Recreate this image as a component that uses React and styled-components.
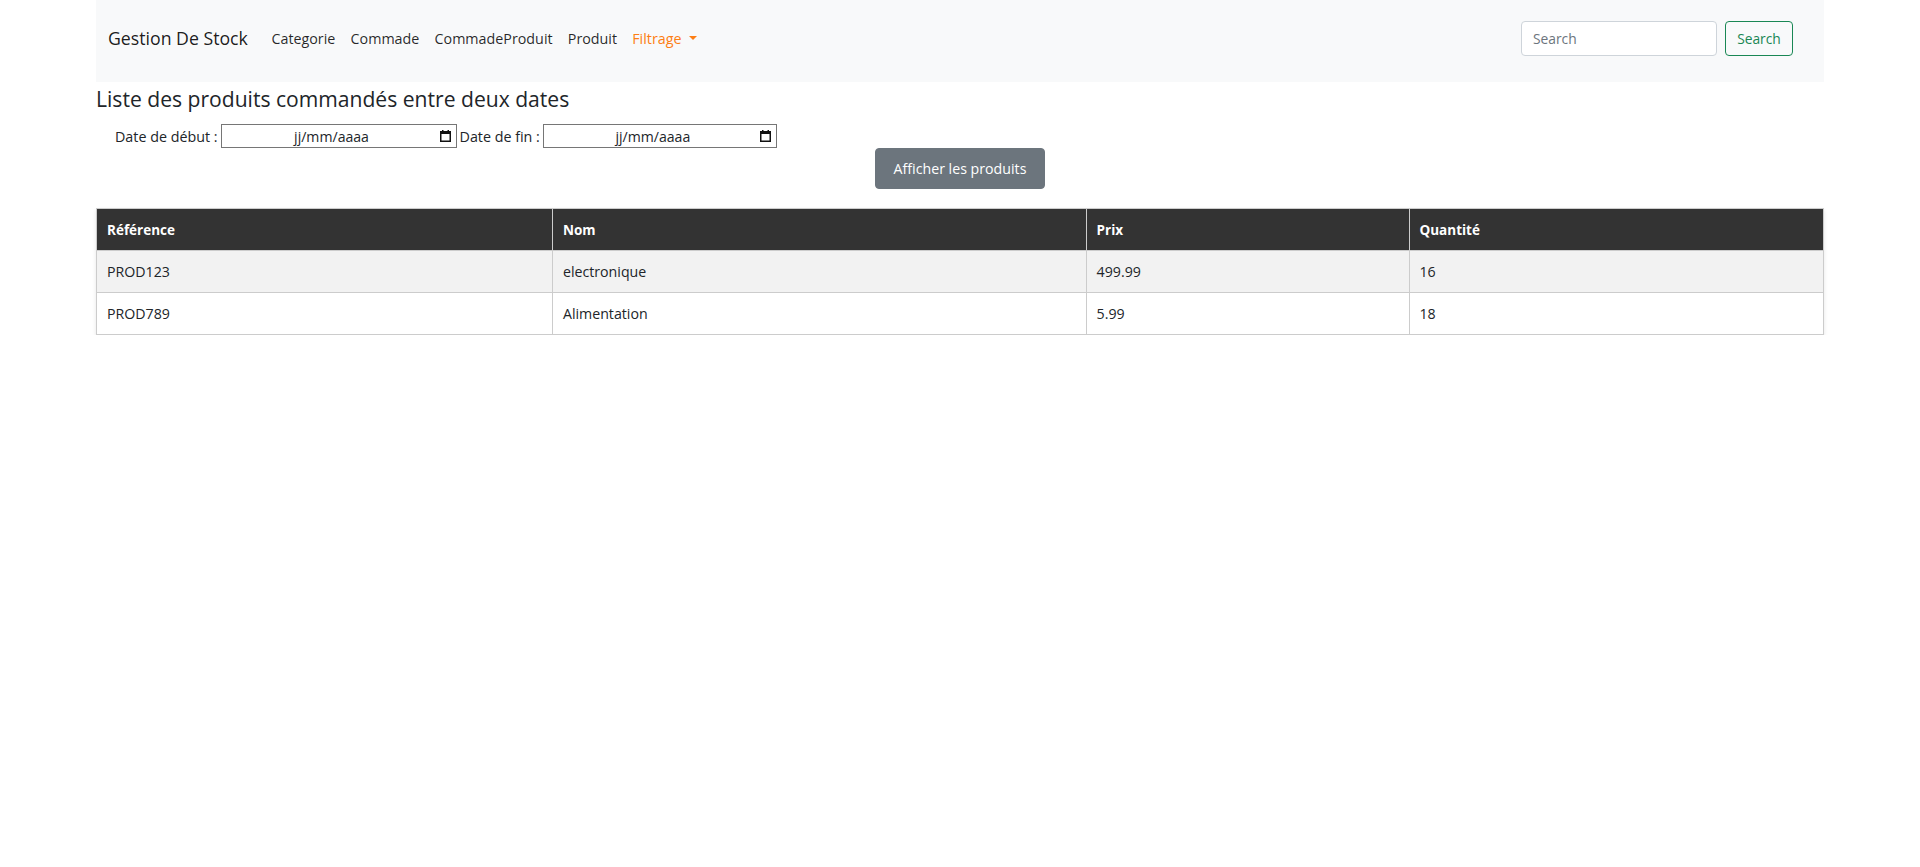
import React from 'react';
import styled, { createGlobalStyle } from 'styled-components';

const GlobalStyle = createGlobalStyle`
  body {
    margin: 0;
    font-family: "Open Sans", "Noto Sans", Arial, sans-serif;
    color: #212529;
    background: #fff;
  }
  * { box-sizing: border-box; }
`;

const Page = styled.div`
  width: 90%;
  margin: 0 auto;
`;

const Navbar = styled.nav`
  display: flex;
  align-items: center;
  height: 82px;
  padding: 0 31px 6px 12px;
  background: #f8f9fa;
`;

const Brand = styled.a`
  font-size: 17.7px;
  color: rgba(0, 0, 0, 0.9);
  text-decoration: none;
  margin-right: 16px;
`;

const NavList = styled.ul`
  display: flex;
  list-style: none;
  margin: 0;
  padding: 0;
`;

const NavLink = styled.a`
  display: flex;
  align-items: center;
  padding: 0 7.6px;
  font-size: 14.3px;
  text-decoration: none;
  color: ${p => (p.$accent ? '#fd7e14' : 'rgba(0, 0, 0, 0.85)')};
`;

const Caret = styled.span`
  display: inline-block;
  margin-left: 7px;
  border-top: 4px solid #fd7e14;
  border-left: 4px solid transparent;
  border-right: 4px solid transparent;
`;

const SearchForm = styled.form`
  display: flex;
  gap: 8px;
  margin-left: auto;
`;

const SearchInput = styled.input`
  width: 196px;
  height: 35px;
  padding: 0 11px;
  font-family: inherit;
  font-size: 13.8px;
  border: 1px solid #ced4da;
  border-radius: 4px;
  background: #fff;
  &::placeholder { color: #6c757d; }
`;

const OutlineButton = styled.button`
  width: 68px;
  height: 35px;
  font-family: inherit;
  font-size: 13.8px;
  color: #198754;
  background: transparent;
  border: 1px solid #198754;
  border-radius: 4px;
`;

const Title = styled.h4`
  margin: 4px 0 0;
  font-size: 21.1px;
  font-weight: 400;
  line-height: 26px;
`;

const DateRow = styled.div`
  display: flex;
  align-items: center;
  height: 24px;
  margin-top: 12px;
  padding-left: 19px;
  font-size: 14.3px;
`;

const Label = styled.label`
  margin-right: 3px;
`;

const DateBox = styled.div`
  display: flex;
  align-items: center;
  width: ${p => p.$w}px;
  height: 24px;
  margin-right: 3px;
  padding: 0 5px 0 2px;
  border: 1px solid #767676;
  font-size: 14.1px;
`;

const DateText = styled.span`
  flex: 1;
  text-align: center;
`;

const ButtonRow = styled.div`
  display: flex;
  justify-content: center;
`;

const SecondaryButton = styled.button`
  width: 170px;
  height: 41px;
  font-family: inherit;
  font-size: 14.2px;
  color: #fff;
  background: #6c757d;
  border: 1px solid #6c757d;
  border-radius: 4px;
`;

const Table = styled.table`
  width: 100%;
  margin-top: 19px;
  border-collapse: collapse;
  border: 1px solid #ccc;
  box-shadow: 0 2px 4px rgba(0, 0, 0, 0.1);
  font-size: 14.2px;
`;

const Th = styled.th`
  height: 42px;
  padding: 0 10px;
  text-align: left;
  font-size: 13.5px;
  font-weight: 700;
  color: #fff;
  background: #333;
  border: 1px solid #ccc;
`;

const Tr = styled.tr`
  background: ${p => (p.$striped ? '#f2f2f2' : '#fff')};
`;

const Td = styled.td`
  height: 42px;
  padding: 0 10px;
  border: 1px solid #ccc;
`;

const CalendarIcon = () => (
  <svg width="11" height="12" viewBox="0 0 11 12">
    <rect x="0.75" y="1.75" width="9.5" height="9.5" fill="none" stroke="#111" strokeWidth="1.5" />
    <rect x="0" y="1" width="11" height="3" fill="#111" />
    <rect x="2" y="0" width="1.5" height="2" fill="#111" />
    <rect x="7.5" y="0" width="1.5" height="2" fill="#111" />
  </svg>
);

const columns = [
  { label: 'Référence', width: '26.4%' },
  { label: 'Nom', width: '30.9%' },
  { label: 'Prix', width: '18.7%' },
  { label: 'Quantité', width: '24%' },
];

const produits = [
  { ref: 'PROD123', nom: 'electronique', prix: '499.99', qte: 16 },
  { ref: 'PROD789', nom: 'Alimentation', prix: '5.99', qte: 18 },
];

export default function App() {
  return (
    <>
      <GlobalStyle />
      <Page>
        <Navbar>
          <Brand href="#">Gestion De Stock</Brand>
          <NavList>
            <li><NavLink href="#">Categorie</NavLink></li>
            <li><NavLink href="#">Commade</NavLink></li>
            <li><NavLink href="#">CommadeProduit</NavLink></li>
            <li><NavLink href="#">Produit</NavLink></li>
            <li>
              <NavLink href="#" $accent>
                Filtrage<Caret />
              </NavLink>
            </li>
          </NavList>
          <SearchForm onSubmit={e => e.preventDefault()}>
            <SearchInput type="search" placeholder="Search" />
            <OutlineButton type="submit">Search</OutlineButton>
          </SearchForm>
        </Navbar>

        <Title>Liste des produits commandés entre deux dates</Title>
        <DateRow>
          <Label>Date de début :</Label>
          <DateBox $w={236}>
            <DateText>jj/mm/aaaa</DateText>
            <CalendarIcon />
          </DateBox>
          <Label>Date de fin :</Label>
          <DateBox $w={234}>
            <DateText>jj/mm/aaaa</DateText>
            <CalendarIcon />
          </DateBox>
        </DateRow>
        <ButtonRow>
          <SecondaryButton>Afficher les produits</SecondaryButton>
        </ButtonRow>

        <Table>
          <thead>
            <tr>
              {columns.map(c => (
                <Th key={c.label} style={{ width: c.width }}>{c.label}</Th>
              ))}
            </tr>
          </thead>
          <tbody>
            {produits.map((p, i) => (
              <Tr key={p.ref} $striped={i % 2 === 0}>
                <Td>{p.ref}</Td>
                <Td>{p.nom}</Td>
                <Td>{p.prix}</Td>
                <Td>{p.qte}</Td>
              </Tr>
            ))}
          </tbody>
        </Table>
      </Page>
    </>
  );
}
